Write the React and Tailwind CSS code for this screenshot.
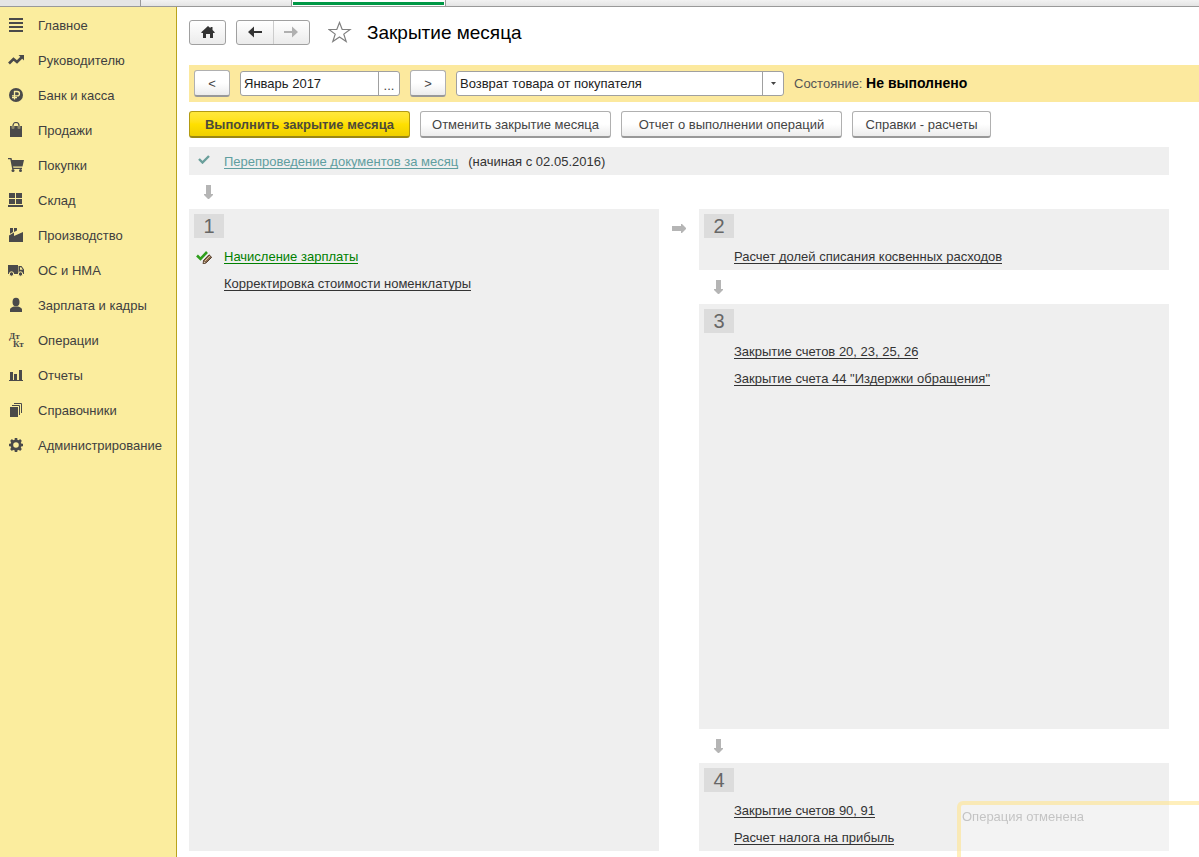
const sections = [
  { title: 'Главное', icon: 'menu' },
  { title: 'Руководителю', icon: 'trend' },
  { title: 'Банк и касса', icon: 'ruble' },
  { title: 'Продажи', icon: 'bag' },
  { title: 'Покупки', icon: 'cart' },
  { title: 'Склад', icon: 'boxes' },
  { title: 'Производство', icon: 'factory' },
  { title: 'ОС и НМА', icon: 'truck' },
  { title: 'Зарплата и кадры', icon: 'person' },
  { title: 'Операции', icon: 'entries' },
  { title: 'Отчеты', icon: 'chart' },
  { title: 'Справочники', icon: 'books' },
  { title: 'Администрирование', icon: 'gear' },
];

const icons = {
  menu: <path d="M1 1h14v2H1zM1 5h14v2H1zM1 9h14v2H1zM1 13h14v2H1z" />,
  trend: (
    <>
      <path d="M1 11.500l4.500-4.500 3.500 3 5-5" fill="none" stroke="currentColor" strokeWidth="2.600" />
      <path d="M10.500 3H16v5.500z" />
    </>
  ),
  ruble: (
    <>
      <circle cx="8" cy="8" r="7" />
      <path d="M6.500 12.500v-8h2.800a2 2 0 0 1 0 4.300H4M4 10.700h5" fill="none" stroke="#fbed9e" strokeWidth="1.300" />
    </>
  ),
  bag: (
    <>
      <path d="M2 4h12v11H2z" />
      <path d="M5 6.500V4a3 3 0 0 1 6 0v2.500" fill="none" stroke="#fbed9e" strokeWidth="2.400" />
      <path d="M5 6.500V3.500a3 3 0 0 1 6 0v3" fill="none" stroke="currentColor" strokeWidth="1.200" />
    </>
  ),
  cart: (
    <>
      <path d="M0 1h3.500l.5 2h12l-1.500 6.500H5l.4 1.300H14V12H4.200L2.300 2.200H0z" />
      <circle cx="5" cy="13.500" r="1.500" />
      <circle cx="12.500" cy="13.500" r="1.500" />
    </>
  ),
  boxes: <path d="M1 1h6v5H1zM8 1h6v5H8zM1 7h6v5H1zM8 7h6v5H8zM0 13h15v2H0z" />,
  factory: <path d="M1 15V8.500L6 5.500V9l9-4v10zM2 1h3v4L2 6.800zM6 1h3v2.500L6 5z" />,
  truck: (
    <>
      <path d="M0 3h10v9H0zM10.500 4h3L16 7.500V12h-5.500z" />
      <path d="M12 5.200h1.200l1.600 2.500H12z" fill="#fbed9e" />
      <circle cx="3.500" cy="12" r="2.200" stroke="#fbed9e" />
      <circle cx="12.500" cy="12" r="2.200" stroke="#fbed9e" />
    </>
  ),
  person: (
    <>
      <ellipse cx="8" cy="5" rx="3.500" ry="4.300" />
      <path d="M2 15v-2.500C2 10.800 4 10.300 6 9.500h4c2 .8 4 1.300 4 3V15z" />
    </>
  ),
  entries: (
    <g fontFamily="Liberation Serif, serif" fontWeight="bold" fontSize="9">
      <text x="1" y="7">Дт</text>
      <text x="5" y="15">Кт</text>
    </g>
  ),
  chart: <path d="M1 13h14v1H1zM2 5h3v8H2zM6 7h3v6H6zM11 3h3v10h-3z" />,
  books: (
    <>
      <path d="M2 5h8v10H2z" />
      <path d="M4 3.500h7.500V13M6 1.500h7.500V11" fill="none" stroke="currentColor" />
    </>
  ),
  gear: (
    <>
      <circle cx="8" cy="8" r="4.200" fill="none" stroke="currentColor" strokeWidth="2.800" />
      <path
        d="M8 1v2.500M8 12.500V15M1 8h2.500M12.500 8H15M3 3l2 2M11 11l2 2M13 3l-2 2M5 11l-2 2"
        stroke="currentColor"
        strokeWidth="2.600"
      />
    </>
  ),
};

function SectionIcon({ name }) {
  return (
    <svg viewBox="0 0 16 16" className="size-4 shrink-0 text-[#4a4a4a]" fill="currentColor" aria-hidden="true">
      {icons[name]}
    </svg>
  );
}

function Arrow({ right }) {
  return (
    <svg viewBox="0 0 14 14" className="size-3.5" fill="#b5b5b5" aria-hidden="true">
      {right ? <path d="M0 5h9V3h1l4 4v1l-4 4H9v-2H0z" /> : <path d="M5 0h5v9h2v1l-4 4H7l-4-4V9h2z" />}
    </svg>
  );
}

function DownArrow() {
  return (
    <div className="flex h-[34px] shrink-0 items-center pl-3">
      <Arrow />
    </div>
  );
}

function Tick({ color }) {
  return (
    <svg viewBox="0 0 12 9" className="h-[9px] w-3" fill="none" aria-hidden="true">
      <path d="M1 4l3.500 3.500L11 1" stroke={color} strokeWidth="2.400" />
    </svg>
  );
}

function ManualTick() {
  return (
    <svg viewBox="0 0 16 13" className="h-[13px] w-4" fill="none" aria-hidden="true">
      <path d="M1 4.500l3.500 3.500L11 1" stroke="#2f9e1c" strokeWidth="2.600" />
      <path d="M7.500 9.500L13 3.800l2.700 2.500-5.500 5.500-3 .9z" fill="#8a6a4c" stroke="#46301f" strokeWidth="0.900" />
      <path d="M9 10l5-5" stroke="#d9bd98" />
      <path d="M7.200 12.600l.8-2.800 2 2z" fill="#f2dfc4" stroke="#46301f" strokeWidth="0.500" />
    </svg>
  );
}

function Button({ className = '', children, ...props }) {
  return (
    <button
      type="button"
      className={`h-[27px] rounded-[3px] border border-b-2 border-[#b0b0b0] border-b-[#999] bg-linear-to-b from-white from-50% to-[#ececec] pt-0.5 text-[#444] ${className}`}
      {...props}
    >
      {children}
    </button>
  );
}

function Stage({ number, items, className = '' }) {
  return (
    <section className={`bg-[#efefef] pt-[5px] ${className}`}>
      <h2 className="ml-[5px] flex h-6 w-[30px] items-center justify-center bg-[#dcdcdc] text-xl text-[#666]">
        {number}
      </h2>
      <ul className="pt-[5px]">
        {items.map((item) => (
          <li key={item.title} className="flex h-[27px] items-center pt-0.5">
            <span className="w-[35px] shrink-0 pl-[7px]">{item.done && <ManualTick />}</span>
            <a
              href="#"
              className={`border-b leading-3 ${item.done ? 'border-[#008000] text-[#008000]' : 'border-[#333] text-[#333]'}`}
            >
              {item.title}
            </a>
          </li>
        ))}
      </ul>
    </section>
  );
}

function Sidebar() {
  return (
    <nav className="w-[177px] shrink-0 border-r border-[#b9a41c] bg-[#fbed9e] pt-px text-[#404040]">
      {sections.map((section) => (
        <a
          key={section.title}
          href="#"
          className="flex h-[35px] items-start gap-3.5 pt-[9px] pl-2 leading-[18px] whitespace-nowrap"
        >
          <SectionIcon name={section.icon} />
          {section.title}
        </a>
      ))}
    </nav>
  );
}

function TabStrip() {
  return (
    <div className="flex h-[7px] shrink-0 border-b border-[#999] bg-linear-to-b from-[#f2f2f2] to-[#e4e4e4]">
      <div className="w-[141px] border-r border-[#999] bg-[#e5e5e5]" />
      <div className="w-[151px] border-r border-[#999]" />
      <div className="w-[154px] border-r border-[#999] bg-white px-px pt-0.5">
        <div className="h-[3px] bg-[#009846]" />
      </div>
    </div>
  );
}

function Header() {
  return (
    <header className="flex h-[58px] shrink-0 items-center pb-2">
      <button
        type="button"
        aria-label="Начальная страница"
        className="flex h-[25px] w-[37px] items-center justify-center rounded-[3px] border border-[#a0a0a0] bg-linear-to-b from-white to-[#ebebeb]"
      >
        <svg viewBox="0 0 14 12" className="h-3 w-3.5" fill="#333" aria-hidden="true">
          <path d="M7 0l2.500 2.200V1h2v3L14 6.500 13 7h-1v5H9V8H5v4H2V7H1L0 6.500z" />
        </svg>
      </button>
      <div className="ml-2.5 flex h-[25px] w-[74px] rounded-[3px] border border-[#a0a0a0] bg-linear-to-b from-white to-[#ebebeb]">
        <button type="button" aria-label="Назад" className="flex flex-1 items-center justify-center border-r border-[#ccc]">
          <svg viewBox="0 0 14 12" className="h-3 w-3.5" fill="#333" aria-hidden="true">
            <path d="M0 6l6-5.500V5h8v2H6v4.500z" />
          </svg>
        </button>
        <button type="button" aria-label="Вперед" className="flex flex-1 items-center justify-center">
          <svg viewBox="0 0 14 12" className="h-3 w-3.5" fill="#b0b0b0" aria-hidden="true">
            <path d="M14 6L8 .5V5H0v2h8v4.500z" />
          </svg>
        </button>
      </div>
      <button type="button" aria-label="В избранное" className="ml-[18px]">
        <svg viewBox="0 0 24 22" className="h-[22px] w-6" fill="none" stroke="#808080" strokeWidth="1.200" aria-hidden="true">
          <path d="M11.500 1.500l2.700 7H22l-6.200 4.600 2.400 7.400-6.700-4.600-6.700 4.600 2.400-7.400L1 8.500h7.800z" />
        </svg>
      </button>
      <h1 className="ml-[15px] pt-0.5 text-[19px] text-black">Закрытие месяца</h1>
    </header>
  );
}

function Filters() {
  return (
    <div className="flex h-[37px] shrink-0 items-center bg-[#fce99e] pl-[5px]">
      <Button className="w-9" aria-label="Предыдущий месяц">&lt;</Button>
      <div className="ml-2.5 flex h-[25px] w-40 rounded-[3px] border border-[#a0a0a0] bg-white">
        <input aria-label="Период" defaultValue="Январь 2017" className="min-w-0 flex-1 pl-[3px] text-[#222] outline-none" />
        <button type="button" aria-label="Выбрать период" className="w-[21px] border-l border-[#a0a0a0] pt-1 text-[#444]">
          ...
        </button>
      </div>
      <Button className="ml-2.5 w-9" aria-label="Следующий месяц">&gt;</Button>
      <div className="relative ml-2.5 h-[25px] w-[328px]">
        <select
          aria-label="Операция"
          className="size-full appearance-none rounded-[3px] border border-[#a0a0a0] bg-white pl-[3px] text-[#222] outline-none"
        >
          <option>Возврат товара от покупателя</option>
        </select>
        <span className="pointer-events-none absolute inset-y-px right-px flex w-[21px] items-center justify-center border-l border-[#a0a0a0]">
          <svg viewBox="0 0 5 3" className="h-[3px] w-[5px]" fill="#444" aria-hidden="true">
            <path d="M0 0h5L2.500 3z" />
          </svg>
        </span>
      </div>
      <p className="ml-2.5 whitespace-nowrap text-[#555]">
        Состояние: <b className="text-sm leading-4 text-black">Не выполнено</b>
      </p>
    </div>
  );
}

function Actions() {
  return (
    <div className="mt-[9px] flex gap-2.5 whitespace-nowrap">
      <button
        type="button"
        className="h-[27px] w-[221px] rounded-[3px] border border-b-2 border-[#b39b12] border-b-[#9a8714] bg-linear-to-b from-[#ffe83c] via-[#ffe000] to-[#efcf00] pt-0.5 font-bold text-[#4d4a3a]"
      >
        Выполнить закрытие месяца
      </button>
      <Button className="w-[191px]">Отменить закрытие месяца</Button>
      <Button className="w-[221px]">Отчет о выполнении операций</Button>
      <Button className="w-[139px]">Справки - расчеты</Button>
    </div>
  );
}

export default function App() {
  return (
    <div className="flex min-h-screen flex-col bg-white font-['Liberation_Sans',Arial,sans-serif] text-[13px] leading-4">
      <TabStrip />
      <div className="flex flex-1">
        <Sidebar />
        <main className="flex min-w-0 flex-1 flex-col pb-1.5 pl-3">
          <Header />
          <Filters />
          <Actions />
          <div className="mt-[9px] mr-[30px] flex h-7 shrink-0 items-center bg-[#efefef] pt-px">
            <span className="w-[35px] pb-1 pl-[9px]">
              <Tick color="#6a9f9b" />
            </span>
            <a href="#" className="border-b border-[#5f9ea0] leading-[13px] text-[#5f9ea0]">
              Перепроведение документов за месяц
            </a>
            <span className="ml-2.5 text-[#333]">(начиная с 02.05.2016)</span>
          </div>
          <DownArrow />
          <div className="mr-[30px] flex flex-1">
            <Stage
              number={1}
              className="flex-1"
              items={[{ title: 'Начисление зарплаты', done: true }, { title: 'Корректировка стоимости номенклатуры' }]}
            />
            <div className="flex w-10 justify-center pt-3">
              <Arrow right />
            </div>
            <div className="flex flex-1 flex-col">
              <Stage number={2} items={[{ title: 'Расчет долей списания косвенных расходов' }]} />
              <DownArrow />
              <Stage
                number={3}
                className="flex-1"
                items={[{ title: 'Закрытие счетов 20, 23, 25, 26' }, { title: 'Закрытие счета 44 "Издержки обращения"' }]}
              />
              <DownArrow />
              <Stage number={4} items={[{ title: 'Закрытие счетов 90, 91' }, { title: 'Расчет налога на прибыль' }]} />
            </div>
          </div>
        </main>
      </div>
      <div
        role="status"
        className="fixed right-0 bottom-0 h-14 w-[242px] rounded-tl-md border-t-4 border-l-4 border-[#ffe07a]/50 bg-white/25 pt-1 pl-px text-[#c4c4c4]"
      >
        Операция отменена
      </div>
    </div>
  );
}
